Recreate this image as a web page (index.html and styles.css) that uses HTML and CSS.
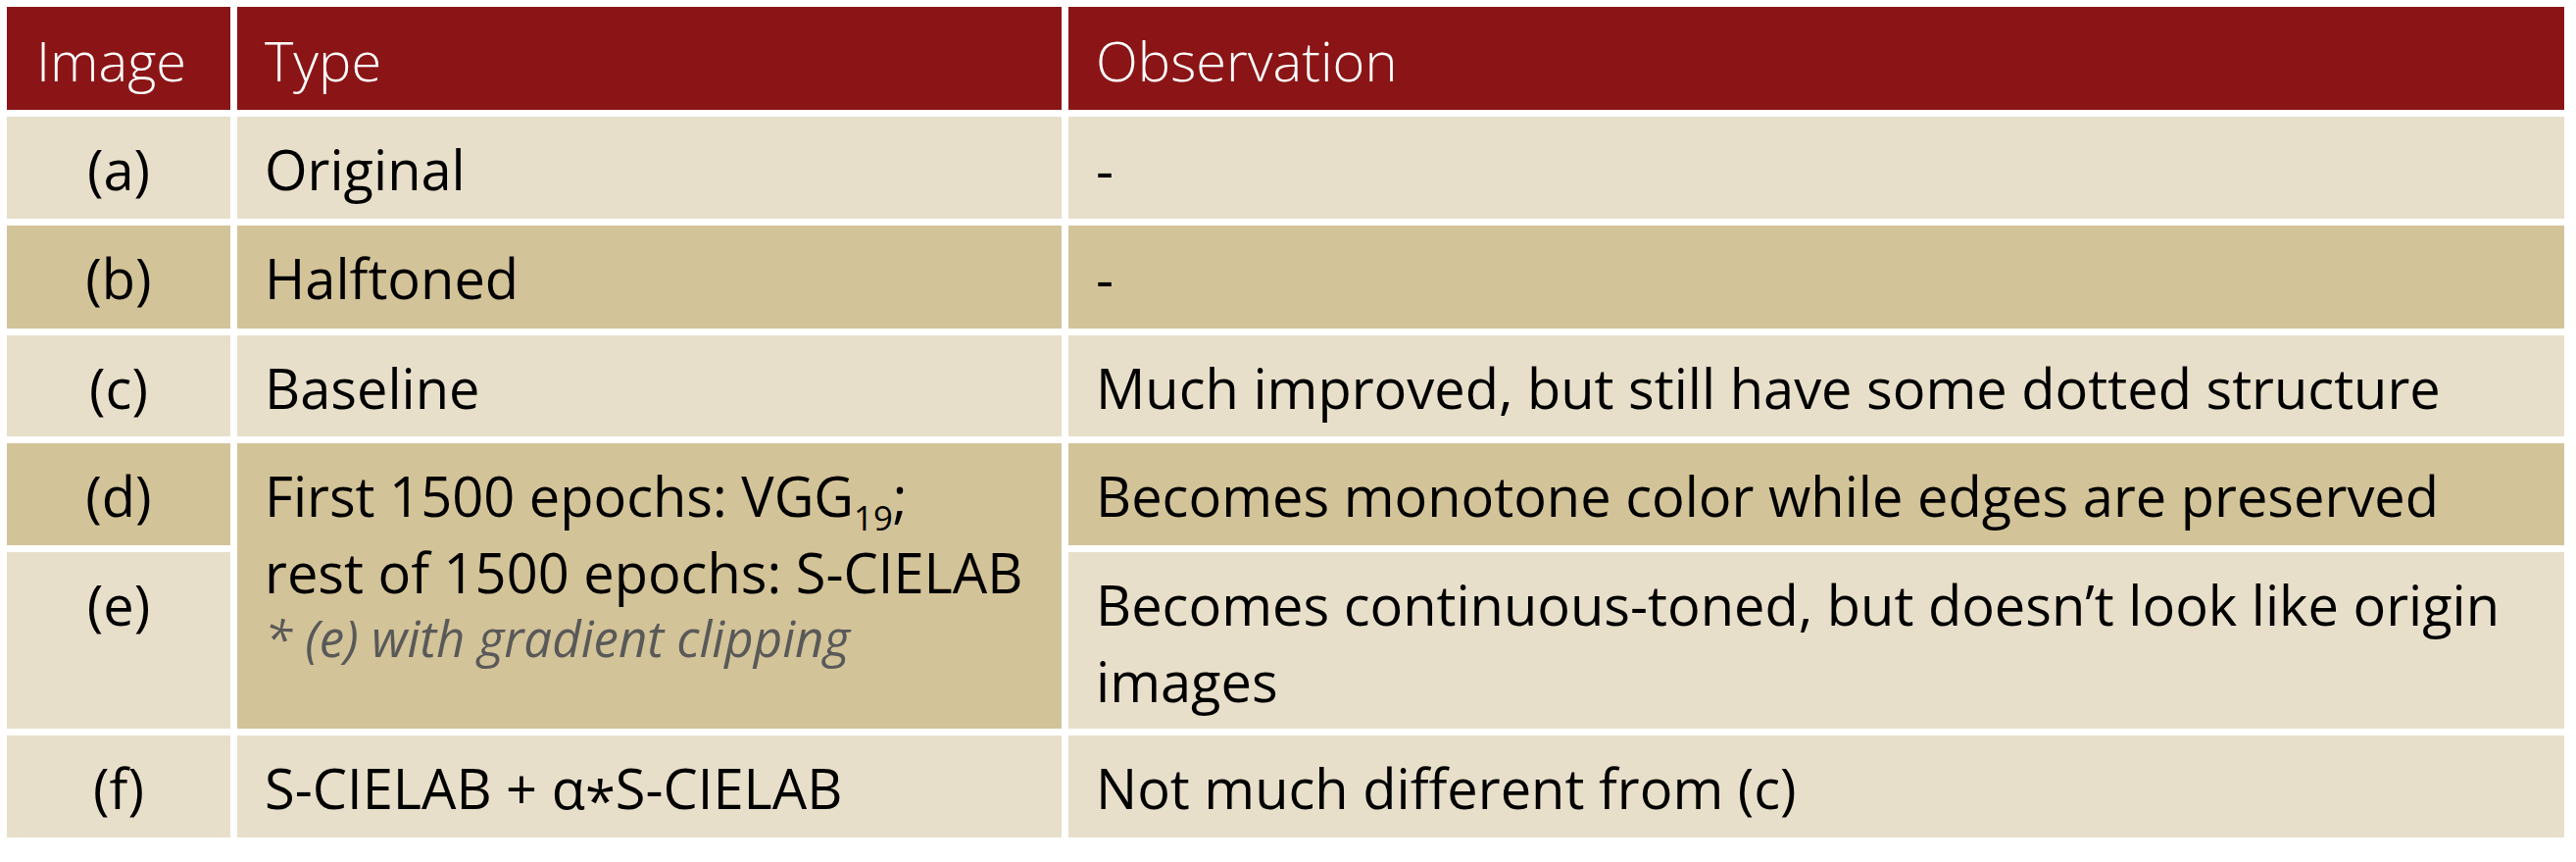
FILE: index.html
```html
<!DOCTYPE html>
<html lang="en">
<head>
<meta charset="utf-8">
<title>Results table</title>
<link rel="stylesheet" href="styles.css">
</head>
<body>
<div class="table">
  <div class="cell head first">Image</div>
  <div class="cell head">Type</div>
  <div class="cell head">Observation</div>

  <div class="cell light first">(a)</div>
  <div class="cell light">Original</div>
  <div class="cell light">-</div>

  <div class="cell dark first">(b)</div>
  <div class="cell dark">Halftoned</div>
  <div class="cell dark">-</div>

  <div class="cell light first">(c)</div>
  <div class="cell light">Baseline</div>
  <div class="cell light">Much improved, but still have some dotted structure</div>

  <div class="cell dark first">(d)</div>
  <div class="cell dark merged">First 1500 epochs: VGG<sub class="sub">19</sub>;<br>rest of 1500 epochs: S-CIELAB<span class="note">* (e) with gradient clipping</span></div>
  <div class="cell dark">Becomes monotone color while edges are preserved</div>

  <div class="cell light first">(e)</div>
  <div class="cell light">Becomes continuous-toned, but doesn’t look like origin images</div>

  <div class="cell light first">(f)</div>
  <div class="cell light">S-CIELAB + α<span class="ast">*</span>S-CIELAB</div>
  <div class="cell light">Not much different from (c)</div>
</div>
</body>
</html>
```
FILE: styles.css
```css
html, body {
  margin: 0;
  background: #ffffff;
}

body {
  padding: 7px;
  font-family: "Open Sans", "Noto Sans", sans-serif;
}

.table {
  display: grid;
  grid-template-columns: 228px 841px 1526px;
  grid-template-rows: 105px 104px 105px 103px 104px 180px 104px;
  gap: 7px;
}

.cell {
  padding: 14px 28px 0 28px;
  font-size: 56px;
  line-height: 78px;
  color: #000000;
  overflow: hidden;
}

.head {
  background: #8b1516;
  color: #ffffff;
  font-weight: 300;
  padding-top: 15px;
}

.light {
  background: #e8dfca;
}

.dark {
  background: #d3c398;
}

.first {
  text-align: center;
  padding-left: 0;
  padding-right: 0;
}

.head.first {
  text-align: left;
  padding-left: 30px;
}

.merged {
  grid-row: span 2;
}

.sub {
  display: inline-block;
  font-size: 0.62em;
  line-height: 22px;
  vertical-align: -14px;
}

.ast {
  vertical-align: -0.22em;
  line-height: 0;
}

.note {
  display: block;
  font-style: italic;
  font-size: 51px;
  line-height: 57px;
  color: #595959;
}
```
